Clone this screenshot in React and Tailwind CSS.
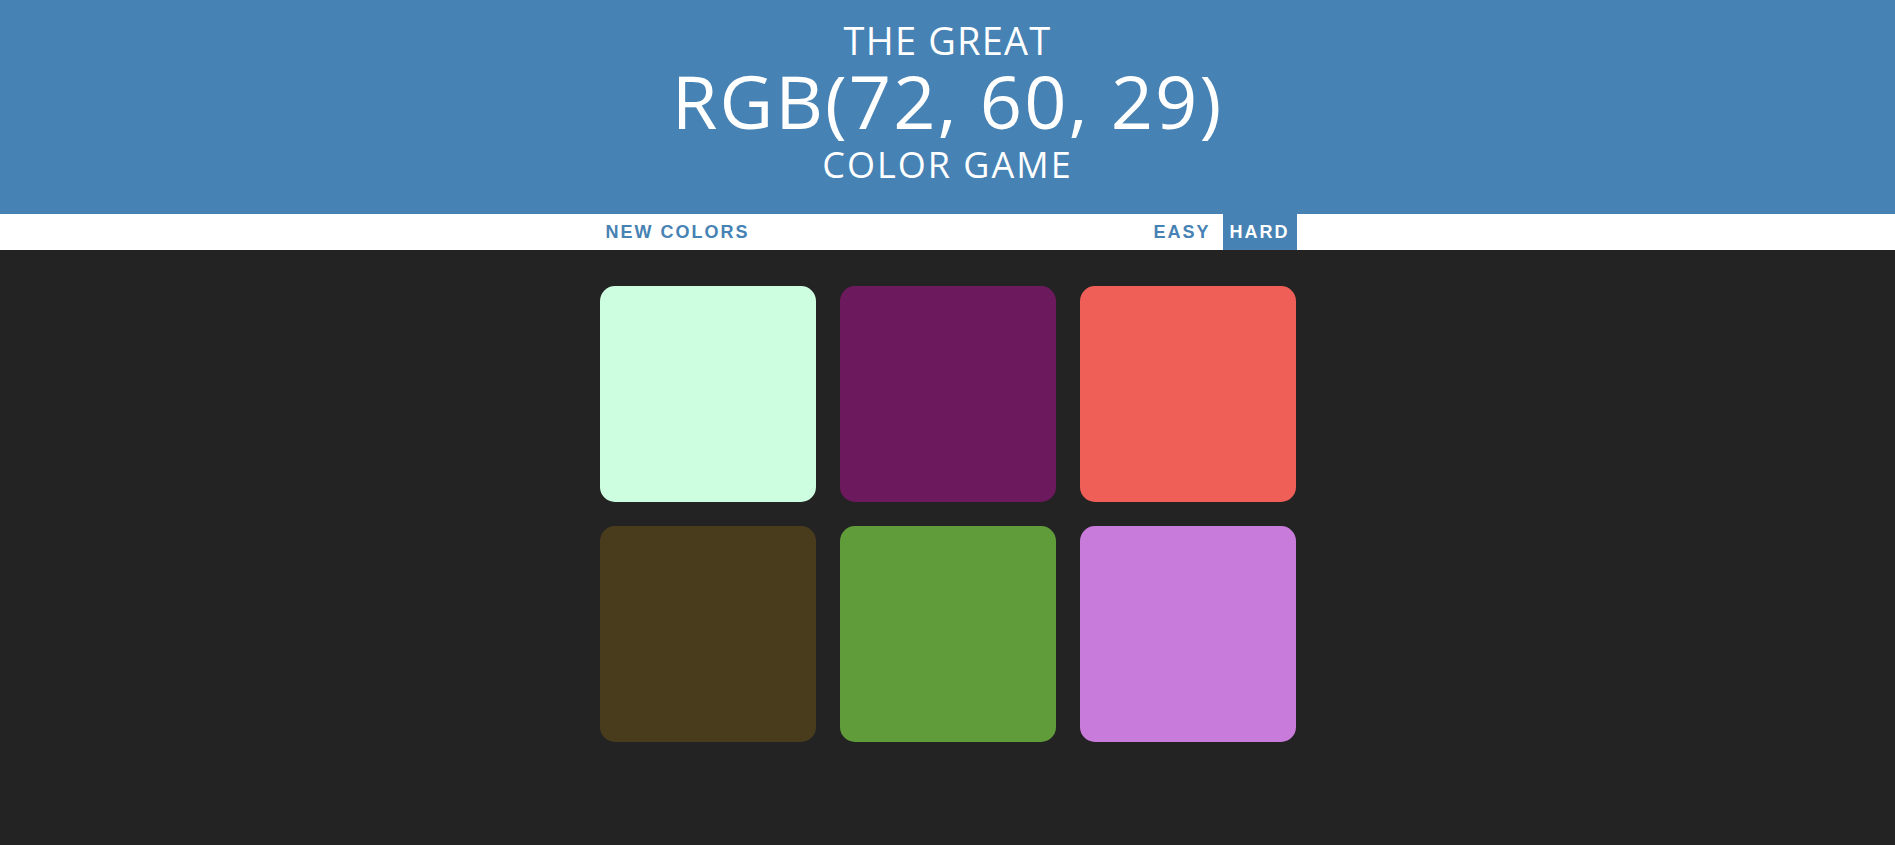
const squares = [
  "#cdfee0",
  "#6d195e",
  "#f05f57",
  "#483c1d",
  "#609d3a",
  "#c87bdb",
];

export default function App() {
  return (
    <div className="min-h-[845px] bg-[#232323]">
      <h1
        className="h-[214px] bg-[#4682b4] pt-[21px] text-center font-normal uppercase text-white"
        style={{ fontFamily: '"Open Sans", sans-serif' }}
      >
        <span className="block text-[38px] leading-[38px] tracking-[1.2px]">The Great</span>
        <span className="mt-[5px] block text-[74px] leading-[74px] tracking-[2px]">
          RGB(72, 60, 29)
        </span>
        <span className="mt-[9px] block text-[36px] leading-[36px] tracking-[2px]">
          Color Game
        </span>
      </h1>

      <div className="h-[36px] bg-white">
        <div
          className="mx-auto flex h-full w-[698px] items-stretch justify-between text-[18px] font-bold tracking-[2px] text-[#4682b4]"
          style={{ fontFamily: '"Liberation Sans", Arial, sans-serif' }}
        >
          <button className="px-[7px] uppercase">New Colors</button>
          <div className="flex items-stretch gap-[5px]">
            <button className="px-[7px] uppercase">Easy</button>
            <button className="bg-[#4682b4] px-[7px] uppercase text-white">Hard</button>
          </div>
        </div>
      </div>

      <div className="mx-auto grid w-[696px] grid-cols-3 gap-[24px] pt-[36px]">
        {squares.map((c) => (
          <div
            key={c}
            className="h-[216px] w-[216px] rounded-[15px]"
            style={{ backgroundColor: c }}
          />
        ))}
      </div>
    </div>
  );
}
